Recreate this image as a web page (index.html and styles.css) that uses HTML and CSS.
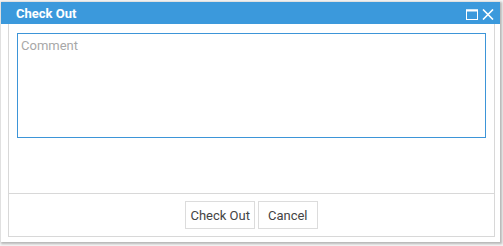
FILE: index.html
```html
<!DOCTYPE html>
<html>
<head>
<meta charset="utf-8">
<link rel="stylesheet" href="styles.css">
</head>
<body>
<div class="window">
  <div class="titlebar">
    <span class="title">Check Out</span>
    <div class="controls">
      <svg class="icon" width="12" height="11" viewBox="0 0 12 11"><rect x="0.5" y="1" width="11" height="9.5" fill="none" stroke="#fff" stroke-width="1"/><rect x="0" y="0.5" width="12" height="2" fill="#fff"/></svg>
      <svg class="icon" width="12" height="11" viewBox="0 0 12 11"><path d="M1 0.5 L11 10.5 M11 0.5 L1 10.5" stroke="#fff" stroke-width="1.6" fill="none"/></svg>
    </div>
  </div>
  <div class="content">
    <div class="panel">
      <div class="form">
        <div class="comment-box">
          <textarea class="comment" placeholder="Comment"></textarea>
        </div>
      </div>
      <div class="footer">
        <button class="btn">Check Out</button>
        <button class="btn">Cancel</button>
      </div>
    </div>
  </div>
</div>
</body>
</html>
```
FILE: styles.css
```css
html, body {
  margin: 0;
  padding: 0;
}
body {
  background: #f4f4f4;
  font-family: Roboto, "Liberation Sans", sans-serif;
  padding: 2px 0 0 1px;
  height: 246px;
  box-sizing: border-box;
}
.window {
  width: 499px;
  height: 240px;
  background: #fff;
  box-shadow: 1px 1px 2px 1px rgba(0,0,0,0.25);
  display: flex;
  flex-direction: column;
}
.titlebar {
  height: 22px;
  background: #3b99dc;
  display: flex;
  align-items: center;
  justify-content: space-between;
  padding: 0 6px 0 15px;
  flex: none;
}
.title {
  color: #fff;
  font-weight: bold;
  font-size: 13px;
}
.controls {
  display: flex;
  gap: 4px;
  align-items: center;
  padding-top: 2px;
}
.icon {
  display: block;
}
.content {
  flex: 1;
  padding: 0 5px 5px 7px;
  display: flex;
}
.panel {
  flex: 1;
  border: 1px solid #d8d8d8;
  border-top: none;
  display: flex;
  flex-direction: column;
}
.form {
  height: 170px;
  padding: 9px 8px 0 8px;
  border-bottom: 1px solid #d8d8d8;
  box-sizing: border-box;
}
.comment-box {
  height: 105px;
  box-sizing: border-box;
  border: 1px solid #3d95d8;
  background: #fff;
}
.comment {
  -webkit-appearance: none;
  appearance: none;
  display: block;
  width: 100%;
  height: 100%;
  box-sizing: border-box;
  border: none;
  resize: none;
  font-family: Roboto, "Liberation Sans", sans-serif;
  font-size: 13px;
  padding: 4px 3px;
  margin: 0;
  outline: none;
  background: transparent;
}
.comment::placeholder {
  color: #a8a8a8;
}
.footer {
  display: flex;
  justify-content: center;
  gap: 3px;
  padding-top: 7px;
}
.btn {
  height: 28px;
  background: #fff;
  border: 1px solid #dcdcdc;
  font-family: Roboto, "Liberation Sans", sans-serif;
  font-size: 13px;
  color: #444;
  padding: 0 4px;
  margin: 0;
}
.btn + .btn {
  padding: 0 9px;
}
```
